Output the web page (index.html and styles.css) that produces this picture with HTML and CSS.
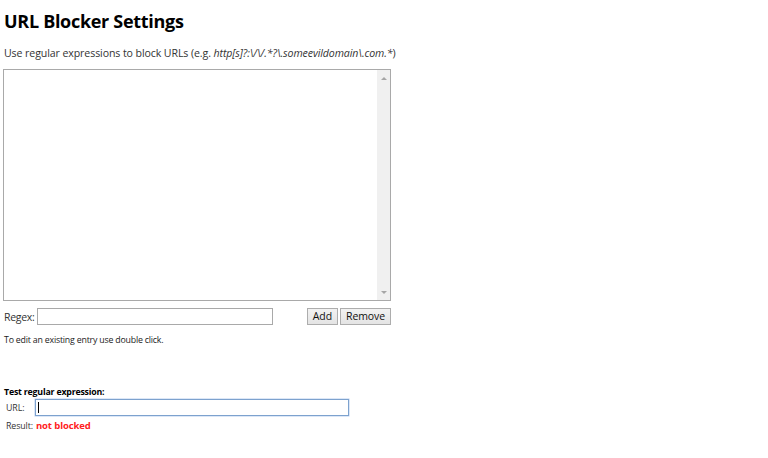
FILE: index.html
```html
<!DOCTYPE html>
<html>
<head>
<meta charset="utf-8">
<link rel="stylesheet" href="styles.css">
</head>
<body>
<div class="page">
  <h1 class="title">URL Blocker Settings</h1>
  <p class="intro">Use regular expressions to block URLs (e.g. <em>http[s]?:\/\/.*?\.someevildomain\.com.*</em>)</p>
  <div class="list">
    <div class="list-body"></div>
    <div class="scrollbar">
      <span class="arrow up"></span>
      <span class="arrow down"></span>
    </div>
  </div>
  <div class="regex-row">
    <label class="lbl">Regex:</label>
    <input class="regex-input" type="text">
    <div class="buttons">
      <button class="btn">Add</button>
      <button class="btn">Remove</button>
    </div>
  </div>
  <p class="note">To edit an existing entry use double click.</p>
  <div class="test">
    <div class="test-title">Test regular expression:</div>
    <div class="url-row">
      <span class="lbl small">URL:</span>
      <div class="url-input"><span class="caret"></span></div>
    </div>
    <div class="result-row">
      <span class="lbl small">Result:</span>
      <span class="result">not blocked</span>
    </div>
  </div>
</div>
</body>
</html>
```

FILE: styles.css
```css
html, body {
  margin: 0;
  padding: 0;
  background: #fff;
}
body {
  font-family: "Open Sans", "Noto Sans", sans-serif;
  color: #222;
}
.page {
  width: 388px;
  padding: 9px 0 0 3px;
}
.title {
  margin: 0 0 0 1px;
  font-size: 18px;
  line-height: 24px;
  font-weight: 700;
  color: #000;
  letter-spacing: -0.3px;
}
.intro {
  margin: 12px 0 0 1px;
  font-size: 10.6px;
  line-height: 16px;
  color: #333;
  letter-spacing: -0.1px;
  white-space: nowrap;
}
.intro em {
  font-style: italic;
}
.list {
  margin-top: 8px;
  height: 230px;
  border: 1px solid #a9a9a9;
  display: flex;
}
.list-body {
  flex: 1;
}
.scrollbar {
  width: 13px;
  background: #f0f0f0;
  display: flex;
  flex-direction: column;
  justify-content: space-between;
  align-items: center;
  padding: 7px 0 6px;
}
.arrow {
  width: 0;
  height: 0;
  border-left: 3px solid transparent;
  border-right: 3px solid transparent;
}
.arrow.up {
  border-bottom: 3px solid #a6a6a6;
}
.arrow.down {
  border-top: 3px solid #a6a6a6;
}
.regex-row {
  margin-top: 7px;
  display: flex;
  align-items: center;
  height: 17px;
}
.lbl {
  font-size: 10.5px;
  color: #333;
  margin-left: 1px;
  letter-spacing: -0.3px;
}
.regex-input {
  margin: 0 0 0 3px;
  width: 236px;
  height: 17px;
  box-sizing: border-box;
  border: 1px solid #a9a9a9;
  padding: 0;
  background: #fff;
}
.buttons {
  margin-left: auto;
  display: flex;
  gap: 2px;
}
.btn {
  font-family: "Open Sans", "Noto Sans", sans-serif;
  font-size: 10.5px;
  height: 17px;
  padding: 0 5px;
  line-height: 15px;
  border: 1px solid #adadad;
  background: linear-gradient(#f2f2f2, #e4e4e4);
  color: #111;
  border-radius: 0;
  letter-spacing: -0.1px;
}
.note {
  margin: 9px 0 0 1px;
  font-size: 8.8px;
  line-height: 12px;
  color: #222;
  letter-spacing: -0.2px;
}
.test {
  margin-top: 40px;
}
.test-title {
  margin-left: 1px;
  font-size: 8.8px;
  font-weight: 700;
  line-height: 12px;
  color: #000;
  letter-spacing: -0.2px;
}
.url-row {
  display: flex;
  align-items: center;
  margin-top: 1px;
  height: 17px;
}
.lbl.small {
  font-size: 8.8px;
  margin-left: 3px;
  letter-spacing: -0.1px;
}
.url-row .lbl.small {
  width: 29px;
}
.url-input {
  width: 314px;
  height: 17px;
  box-sizing: border-box;
  border: 1px solid #7da2ce;
  box-shadow: 0 0 0 0.5px #b8cfee;
  padding: 2px 0 0 2px;
}
.caret {
  display: block;
  width: 1px;
  height: 11px;
  background: #000;
}
.result-row {
  margin-top: 3px;
  display: flex;
  align-items: baseline;
  gap: 3px;
  line-height: 13px;
}
.result {
  font-size: 9.5px;
  font-weight: 700;
  color: #f22;
  letter-spacing: -0.1px;
}
```
